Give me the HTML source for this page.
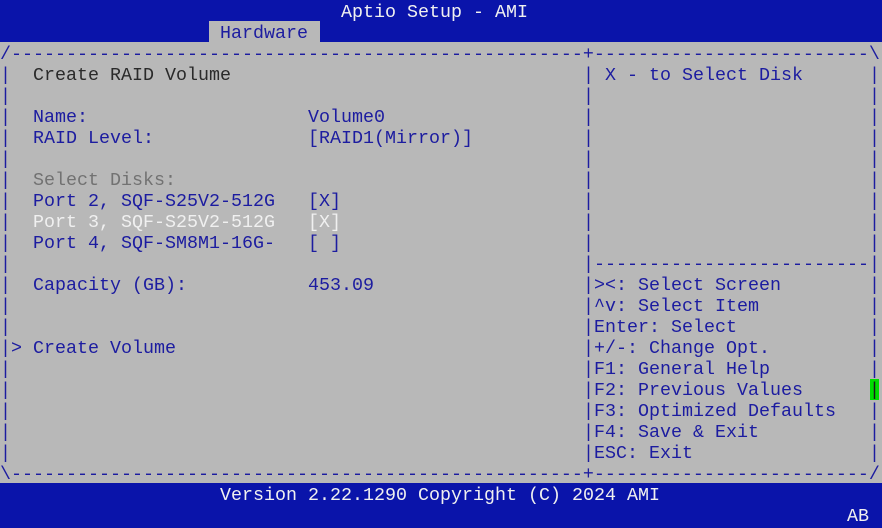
<!DOCTYPE html>
<html><head><meta charset="utf-8"><style>
html,body{margin:0;padding:0;width:882px;height:528px;overflow:hidden;background:#b8b8b8}
body{position:relative;font-family:"Liberation Mono","DejaVu Sans Mono",monospace;font-size:18.33px;line-height:21px;color:#1c1ca0}
.t{position:absolute;white-space:pre;height:21px;margin-top:2px}
.blue{position:absolute;left:0;width:882px;background:#0a14aa}
.w{color:#f0f0f0}.k{color:#2a2a2a}.g{color:#727272}
pre{margin:0;margin-top:2px;font:inherit;line-height:21px;position:absolute}
</style></head><body>
<div class="blue" style="top:0;height:42px"></div>
<div class="blue" style="top:483px;height:45px"></div>
<div style="position:absolute;left:209px;top:21px;width:111px;height:21px;background:#b8b8b8"></div>
<div class="t w" style="left:341px;top:0">Aptio Setup - AMI</div>
<div class="t" style="left:220px;top:21px">Hardware</div>
<div class="t w" style="left:220px;top:483px">Version 2.22.1290 Copyright (C) 2024 AMI</div>
<div class="t w" style="left:847px;top:504px">AB</div>

<div class="t" style="left:0;top:42px">/----------------------------------------------------+-------------------------\</div>
<div class="t" style="left:0;top:462px">\----------------------------------------------------+-------------------------/</div>
<pre style="left:0;top:63px">|
|
|
|
|
|
|
|
|
|
|
|
|
|
|
|
|
|
|</pre>
<pre style="left:583px;top:63px">|
|
|
|
|
|
|
|
|
|
|
|
|
|
|
|
|
|
|</pre>
<pre style="left:869px;top:63px">|
|
|
|
|
|
|
|
|
|
|
|
|
|
|

|
|
|</pre>
<div style="position:absolute;left:870px;top:379px;width:9px;height:21px;background:#00dd00"></div>
<div class="t" style="left:869px;top:378px;color:#1a1a1a">|</div>
<div class="t" style="left:594px;top:252px">-------------------------</div>

<div class="t k" style="left:33px;top:63px">Create RAID Volume</div>
<div class="t" style="left:33px;top:105px">Name:</div>
<div class="t" style="left:308px;top:105px">Volume0</div>
<div class="t" style="left:33px;top:126px">RAID Level:</div>
<div class="t" style="left:308px;top:126px">[RAID1(Mirror)]</div>
<div class="t g" style="left:33px;top:168px">Select Disks:</div>
<div class="t" style="left:33px;top:189px">Port 2, SQF-S25V2-512G</div>
<div class="t" style="left:308px;top:189px">[X]</div>
<div class="t w" style="left:33px;top:210px">Port 3, SQF-S25V2-512G</div>
<div class="t w" style="left:308px;top:210px">[X]</div>
<div class="t" style="left:33px;top:231px">Port 4, SQF-SM8M1-16G-</div>
<div class="t" style="left:308px;top:231px">[ ]</div>
<div class="t" style="left:33px;top:273px">Capacity (GB):</div>
<div class="t" style="left:308px;top:273px">453.09</div>
<div class="t" style="left:11px;top:336px">&gt; Create Volume</div>

<div class="t" style="left:605px;top:63px">X - to Select Disk</div>
<pre style="left:594px;top:273px">&gt;&lt;: Select Screen
^v: Select Item
Enter: Select
+/-: Change Opt.
F1: General Help
F2: Previous Values
F3: Optimized Defaults
F4: Save &amp; Exit
ESC: Exit</pre>
</body></html>
